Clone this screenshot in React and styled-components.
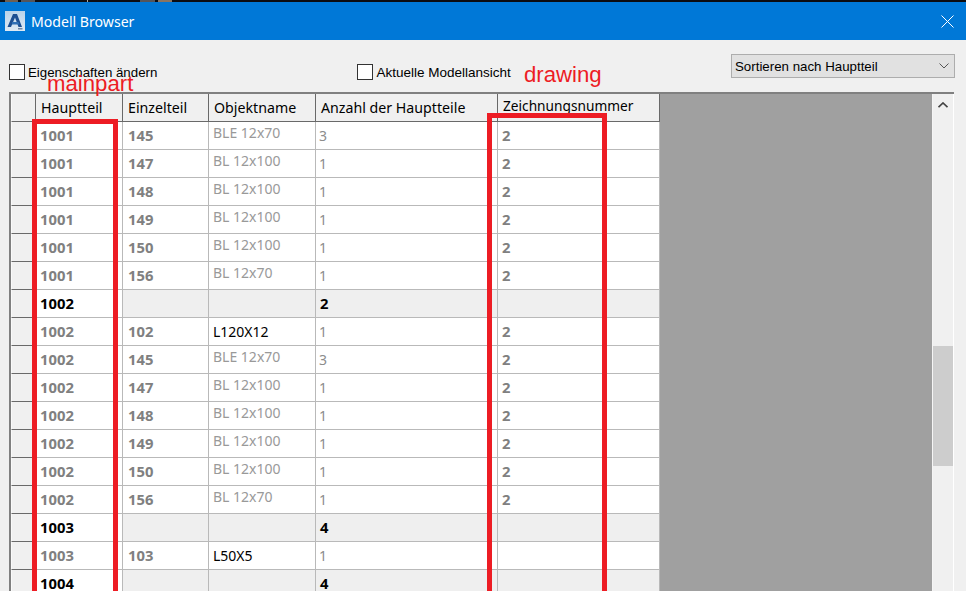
import styled, { createGlobalStyle } from 'styled-components';

const GlobalStyle = createGlobalStyle`
  html, body {
    margin: 0;
    padding: 0;
    overflow: hidden;
    background: #f0f0f0;
  }
`;

const uiFont = `'Noto Sans', 'Open Sans', sans-serif`;
const sansFont = `'Liberation Sans', Arial, sans-serif`;

const Window = styled.div`
  position: relative;
  width: 966px;
  height: 591px;
  display: flex;
  flex-direction: column;
  overflow: hidden;
  background: #f0f0f0;
`;
const TopStrip = styled.div`
  height: 2px;
  background: linear-gradient(
    to right,
    #0c0c10 5px,
    #6e5f52 5px,
    #6e5f52 18px,
    #0c0c10 18px,
    #0c0c10 21px,
    #55555a 21px,
    #55555a 35px,
    #0c0c10 35px,
    #0c0c10 87px,
    #b0a89c 87px,
    #b0a89c 88px,
    #0c0c10 88px,
    #0c0c10 140px,
    #55555a 140px,
    #55555a 155px,
    #0c0c10 155px,
    #0c0c10 158px,
    #8a7460 158px,
    #8a7460 172px,
    #0c0c10 172px
  );
`;
const TitleBar = styled.div`
  height: 38px;
  background: #0078d7;
  display: flex;
  align-items: center;
  padding: 0 12px 0 5px;
  color: #fff;
`;
const TitleText = styled.div`
  margin-left: 6px;
  font: 14.1px ${uiFont};
  flex: 1;
`;
const Toolbar = styled.div`
  height: 52px;
  display: flex;
  align-items: flex-start;
  padding: 0 11px 0 9px;
`;
const CheckItem = styled.label`
  display: flex;
  align-items: center;
  margin-top: 24px;
  margin-left: ${(props) => props.$offset || 0}px;
  font: ${(props) => props.$size || 13}px ${sansFont};
  color: #000;
`;
const CheckBox = styled.span`
  width: 14px;
  height: 14px;
  border: 1px solid #333;
  background: #fff;
  margin-right: 3px;
`;
const SortSelect = styled.div`
  margin-left: auto;
  margin-top: 14px;
  width: 224px;
  height: 24px;
  box-sizing: border-box;
  border: 1px solid #adadad;
  background: #e1e1e1;
  display: flex;
  align-items: center;
  justify-content: space-between;
  padding: 0 5px 0 3px;
  font: 13.3px ${sansFont};
  color: #000;
`;
const TableArea = styled.div`
  flex: 1;
  display: flex;
  margin-left: 9px;
  margin-right: 12px;
  border-top: 2px solid #808080;
  min-height: 0;
`;
const Table = styled.div`
  width: 651px;
  flex: none;
  box-sizing: border-box;
  border-left: 2px solid #808080;
  background: #fff;
`;
const Row = styled.div`
  display: grid;
  grid-template-columns: 25px 87px 86px 107px 182px 162px;
  height: 28px;
`;
const Cell = styled.div`
  box-sizing: border-box;
  border-right: 1px solid #b9b9b9;
  border-bottom: 1px solid #b9b9b9;
  background: ${(props) => (props.$shaded ? '#efefef' : '#fff')};
  display: flex;
  align-items: center;
  padding-left: ${(props) => props.$pad ?? 5}px;
  padding-bottom: ${(props) => props.$lift || 0}px;
  color: ${(props) => props.$color || '#000'};
  font: ${(props) => (props.$bold ? `700 14.8px 'Open Sans'` : `14px ${uiFont}`)}, sans-serif;
  white-space: nowrap;
`;
const RowHead = styled.div`
  box-sizing: border-box;
  background: #f0f0f0;
  border-left: 1px solid #fafafa;
  border-right: 1px solid #696969;
  border-bottom: 1px solid #696969;
`;
const HeadCell = styled.div`
  box-sizing: border-box;
  background: #f0f0f0;
  border-right: 1px solid #696969;
  border-bottom: 1px solid #696969;
  display: flex;
  align-items: center;
  padding-left: 5px;
  padding-bottom: ${(props) => props.$lift || 0}px;
  font: ${(props) => props.$size || 14.2}px ${uiFont};
  color: #000;
  white-space: nowrap;
`;
const EmptyArea = styled.div`
  width: 272px;
  flex: none;
  background: #a0a0a0;
`;
const Scrollbar = styled.div`
  flex: none;
  width: 22px;
  box-sizing: border-box;
  border-left: 1px solid #f5f5f5;
  border-right: 1px solid #fff;
  background: #f0f0f0;
  display: flex;
  flex-direction: column;
  align-items: center;
`;
const ScrollArrow = styled.div`
  height: 22px;
  display: flex;
  align-items: center;
`;
const ScrollThumb = styled.div`
  width: 20px;
  height: 120px;
  margin-top: 230px;
  background: #cdcdcd;
`;
const Note = styled.div`
  position: absolute;
  left: ${(props) => props.$x}px;
  top: ${(props) => props.$y}px;
  font: 22.2px ${sansFont};
  color: #ed1c24;
`;
const Marker = styled.div`
  position: absolute;
  left: ${(props) => props.$x}px;
  top: ${(props) => props.$y}px;
  width: ${(props) => props.$w}px;
  height: 600px;
  box-sizing: border-box;
  border: 5px solid #ed1c24;
`;

const AppIcon = () => (
  <svg width="20" height="20" viewBox="0 0 20 20">
    <defs>
      <linearGradient id="iconBack" x1="0" y1="0" x2="0" y2="1">
        <stop offset="0" stopColor="#b9d3ea" />
        <stop offset="1" stopColor="#dfe9f3" />
      </linearGradient>
    </defs>
    <rect width="20" height="20" fill="url(#iconBack)" />
    <path d="M2.5 16 L8 3 H12 L17 16 H13.5 L10 6.5 L6 16 Z" fill="#1c4f92" />
    <path d="M7 11 H13.5 L14.5 13.5 H7 Z" fill="#2f6fb5" />
    <rect x="13" y="17" width="4.5" height="1.5" fill="#6f86a3" />
  </svg>
);
const CloseIcon = () => (
  <svg width="13" height="13" viewBox="0 0 13 13">
    <path d="M0.5 0.5 L12.5 12.5 M12.5 0.5 L0.5 12.5" stroke="#fff" strokeWidth="1" fill="none" />
  </svg>
);
const ChevronDown = () => (
  <svg width="10" height="6" viewBox="0 0 10 6">
    <path d="M0.5 0.5 L5 5 L9.5 0.5" stroke="#555" strokeWidth="1" fill="none" />
  </svg>
);
const ChevronUp = () => (
  <svg width="10" height="6" viewBox="0 0 10 6">
    <path d="M0.5 5.2 L5 1 L9.5 5.2" stroke="#444" strokeWidth="1.7" fill="none" />
  </svg>
);

const part = (main, item, name, count, drawing, plain) => ({ main, item, name, count, drawing, plain });
const group = (main, count) => ({ main, count, isGroup: true });

const rows = [
  part('1001', '145', 'BLE 12x70', '3', '2'),
  part('1001', '147', 'BL 12x100', '1', '2'),
  part('1001', '148', 'BL 12x100', '1', '2'),
  part('1001', '149', 'BL 12x100', '1', '2'),
  part('1001', '150', 'BL 12x100', '1', '2'),
  part('1001', '156', 'BL 12x70', '1', '2'),
  group('1002', '2'),
  part('1002', '102', 'L120X12', '1', '2', true),
  part('1002', '145', 'BLE 12x70', '3', '2'),
  part('1002', '147', 'BL 12x100', '1', '2'),
  part('1002', '148', 'BL 12x100', '1', '2'),
  part('1002', '149', 'BL 12x100', '1', '2'),
  part('1002', '150', 'BL 12x100', '1', '2'),
  part('1002', '156', 'BL 12x70', '1', '2'),
  group('1003', '4'),
  part('1003', '103', 'L50X5', '1', '', true),
  group('1004', '4'),
];

const grey = '#808080';

function DataRow({ row }) {
  if (row.isGroup) {
    return (
      <Row>
        <RowHead />
        <Cell $bold $pad={4} $lift={2}>{row.main}</Cell>
        <Cell $shaded />
        <Cell $shaded />
        <Cell $shaded $bold $pad={4} $lift={2}>{row.count}</Cell>
        <Cell $shaded />
      </Row>
    );
  }
  return (
    <Row>
      <RowHead />
      <Cell $bold $pad={4} $lift={2} $color={grey}>{row.main}</Cell>
      <Cell $bold $lift={2} $color={grey}>{row.item}</Cell>
      <Cell $color={row.plain ? '#000' : '#999'} $lift={row.plain ? 1 : 6} $pad={4}>{row.name}</Cell>
      <Cell $pad={3} $color="#8c8c8c">{row.count}</Cell>
      <Cell $bold $pad={4} $lift={2} $color={grey}>{row.drawing}</Cell>
    </Row>
  );
}

export default function App() {
  return (
    <Window>
      <GlobalStyle />
      <TopStrip />
      <TitleBar>
        <AppIcon />
        <TitleText>Modell Browser</TitleText>
        <CloseIcon />
      </TitleBar>
      <Toolbar>
        <CheckItem $size={13.3}>
          <CheckBox />
          Eigenschaften ändern
        </CheckItem>
        <CheckItem $offset={200} $size={13.5}>
          <CheckBox />
          Aktuelle Modellansicht
        </CheckItem>
        <SortSelect>
          Sortieren nach Hauptteil
          <ChevronDown />
        </SortSelect>
      </Toolbar>
      <TableArea>
        <Table>
          <Row>
            <RowHead />
            <HeadCell>Hauptteil</HeadCell>
            <HeadCell>Einzelteil</HeadCell>
            <HeadCell>Objektname</HeadCell>
            <HeadCell>Anzahl der Hauptteile</HeadCell>
            <HeadCell $lift={4} $size={13.7}>Zeichnungsnummer</HeadCell>
          </Row>
          {rows.map((row, i) => (
            <DataRow key={i} row={row} />
          ))}
        </Table>
        <EmptyArea />
        <Scrollbar>
          <ScrollArrow>
            <ChevronUp />
          </ScrollArrow>
          <ScrollThumb />
        </Scrollbar>
      </TableArea>
      <Marker $x={32} $y={119} $w={86} />
      <Marker $x={487} $y={113} $w={120} />
      <Note $x={47} $y={71}>mainpart</Note>
      <Note $x={524} $y={62}>drawing</Note>
    </Window>
  );
}
